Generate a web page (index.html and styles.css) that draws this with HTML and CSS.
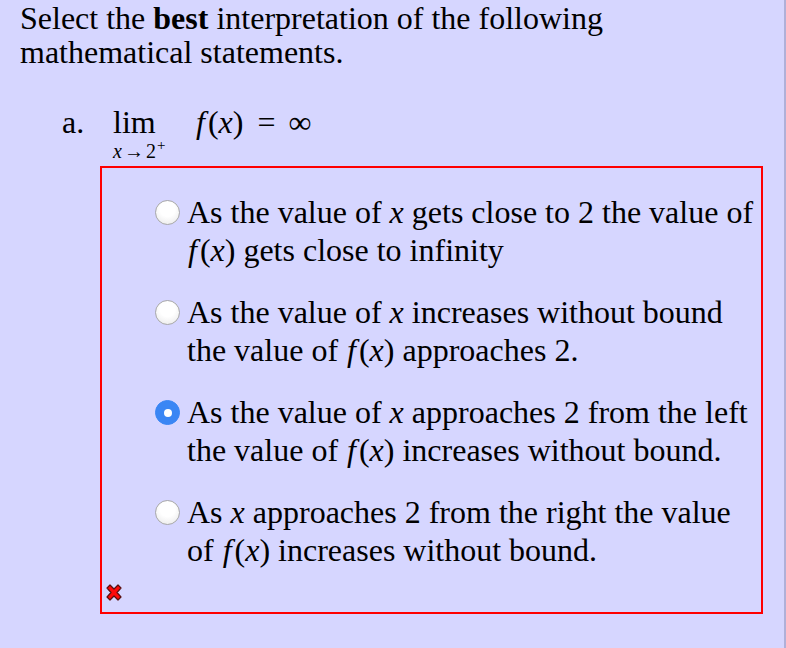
FILE: index.html
```html
<!DOCTYPE html>
<html>
<head>
<meta charset="utf-8">
<link rel="stylesheet" href="styles.css">
</head>
<body>
<div class="page">
  <p class="prompt">Select the <b>best</b> interpretation of the following<br>mathematical statements.</p>
  <div class="part">
    <span class="label">a.</span>
    <span class="lim">
      <span class="limword">lim</span>
      <span class="limsub"><i class="m">x</i><span class="arrow">→</span>2<sup>+</sup></span>
    </span>
    <span class="expr"><i class="m mf">f</i>(<i class="m">x</i>)<span class="eq">=</span><span class="inf">∞</span></span>
  </div>
  <div class="answers">
    <div class="opts">
      <div class="opt">
        <span class="radio"></span>
        <div class="txt">As the value of <i class="m">x</i> gets close to 2 the value of<br><i class="m mf">f</i>(<i class="m">x</i>) gets close to infinity</div>
      </div>
      <div class="opt">
        <span class="radio"></span>
        <div class="txt">As the value of <i class="m">x</i> increases without bound<br>the value of <i class="m mf">f</i>(<i class="m">x</i>) approaches 2.</div>
      </div>
      <div class="opt">
        <span class="radio checked"></span>
        <div class="txt">As the value of <i class="m">x</i> approaches 2 from the left<br>the value of <i class="m mf">f</i>(<i class="m">x</i>) increases without bound.</div>
      </div>
      <div class="opt">
        <span class="radio"></span>
        <div class="txt">As <i class="m">x</i> approaches 2 from the right the value<br>of <i class="m mf">f</i>(<i class="m">x</i>) increases without bound.</div>
      </div>
    </div>
    <div class="mark">
      <svg width="20" height="19" viewBox="0 0 20 19">
        <path d="M3 5 L6 2 L10 6 L14 2 L17 5 L13 9.5 L17 14 L14 17 L10 13 L6 17 L3 14 L7 9.5 Z" fill="#ff0a0a" stroke="#5a1010" stroke-width="1.2" stroke-linejoin="round"/>
      </svg>
    </div>
  </div>
</div>
</body>
</html>
```
FILE: styles.css
```css
html, body {
  margin: 0;
  padding: 0;
}
body {
  background: #d6d6ff;
  font-family: "Liberation Serif", "Times New Roman", serif;
  color: #000;
}
.page {
  width: 784px;
  height: 648px;
  border-right: 2px solid #b0b0d8;
  overflow: hidden;
}
.prompt {
  margin: 0;
  padding: 1px 0 0 20px;
  font-size: 32px;
  line-height: 34px;
}
.m {
  font-style: italic;
}
.mf {
  padding: 0 3px 0 1px;
}
.part {
  display: flex;
  align-items: flex-start;
  margin-top: 36px;
  padding-left: 62px;
  font-size: 32px;
  line-height: 34px;
  height: 52px;
}
.label {
  width: 51px;
}
.lim {
  display: flex;
  flex-direction: column;
  width: 82px;
}
.limword {
  line-height: 34px;
}
.limsub {
  font-size: 20px;
  line-height: 20px;
  margin-top: 2px;
}
.limsub .arrow {
  margin: 0 2px;
}
.limsub sup {
  font-size: 15px;
  vertical-align: 8px;
  line-height: 0;
  margin-left: 1px;
}
.expr .eq {
  margin: 0 13px 0 14px;
}
.answers {
  margin: 9px 0 0 100px;
  width: 606px;
  height: 419px;
  border: 2px solid #ff0000;
  padding: 25px 0 0 53px;
  box-sizing: content-box;
}
.opts {
  display: flex;
  flex-direction: column;
  gap: 24px;
}
.opt {
  display: flex;
  align-items: flex-start;
  gap: 7px;
}
.radio {
  flex: none;
  width: 23px;
  height: 23px;
  margin-top: 7px;
  border-radius: 50%;
  border: 1px solid #a8a8a8;
  background: radial-gradient(circle at 50% 35%, #ffffff 40%, #e6e6e6 100%);
  box-sizing: content-box;
}
.radio.checked {
  border-color: #3a86f4;
  background: #3a86f4;
  position: relative;
}
.radio.checked::after {
  content: "";
  position: absolute;
  left: 8px;
  top: 8px;
  width: 8px;
  height: 8px;
  border-radius: 50%;
  background: #fff;
}
.txt {
  font-size: 32px;
  line-height: 38px;
  white-space: nowrap;
}
.mark {
  margin: 14px 0 0 -51px;
  height: 19px;
}
.mark svg {
  display: block;
}
```
